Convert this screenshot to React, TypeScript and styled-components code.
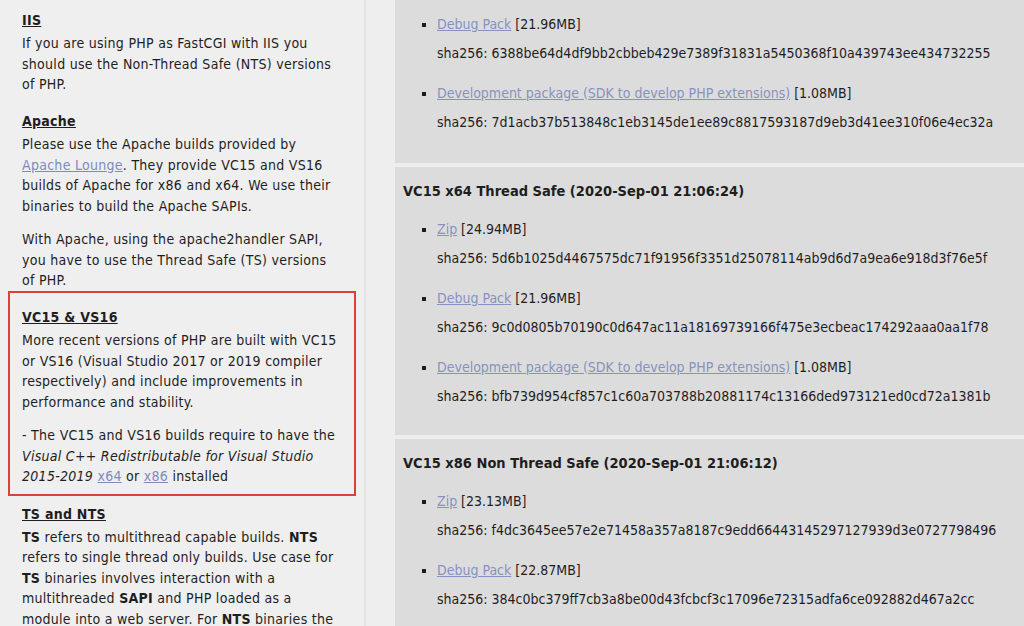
import React from 'react'
import styled, { createGlobalStyle } from 'styled-components'

const GlobalStyle = createGlobalStyle`
  html, body {
    margin: 0;
    padding: 0;
  }
  body {
    background: #eeeeee;
    color: #1e1e1e;
    font-family: 'DejaVu Sans', 'Liberation Sans', sans-serif;
  }
`

const Page = styled.div`
  display: flex;
  width: 1024px;
  height: 626px;
  overflow: hidden;
`

const Sidebar = styled.aside`
  flex: 0 0 366px;
  background: #efefef;
  border-right: 2px solid #e4e4e4;
  padding: 10px 0 0 22px;
  box-sizing: border-box;
  font-size: 14px;
  font-stretch: condensed;
  letter-spacing: 0.28px;
  line-height: 20.5px;
`

const SideText = styled.p<{ $tight?: boolean }>`
  margin: 0 0 ${({ $tight }) => ($tight ? 0.5 : 13)}px;
  white-space: nowrap;
`

const SideHeading = styled.h3`
  margin: 0 0 3px;
  font-size: 14px;
  line-height: 20px;
  font-weight: bold;
  text-decoration: underline;
  ${SideText} + & {
    margin-top: 16.5px;
  }
`

const Highlight = styled.section`
  width: 348px;
  box-sizing: border-box;
  margin: 0 0 8px -14px;
  padding: 14px 0 7px 12px;
  border: 2px solid #d9413d;
  ${SideText}:last-child {
    margin-bottom: 0;
  }
`

const SideLink = styled.a`
  color: #7f8bbd;
  text-decoration: underline;
`

const Main = styled.main`
  flex: 1;
  display: flex;
  flex-direction: column;
  gap: 4px;
  padding-left: 29px;
  background: #eeeeee;
  font-stretch: condensed;
`

const Panel = styled.div<{ $top?: number; $bottom?: number }>`
  background: #dcdcdc;
  padding: ${({ $top }) => $top ?? 14}px 0 ${({ $bottom }) => $bottom ?? 9}px 8px;
`

const BuildTitle = styled.h4`
  margin: 0 0 18px;
  font-size: 14.5px;
  line-height: 20px;
  font-weight: bold;
`

const Files = styled.ul`
  margin: 0;
  padding-left: 34px;
  list-style: square;
  font-size: 14px;
  line-height: 20px;
`

const File = styled.li`
  margin-bottom: 20px;
`

const FileLink = styled.a`
  color: #8892bf;
  text-decoration: underline;
`

const Sha = styled.span`
  display: block;
  margin-top: 9px;
  white-space: nowrap;
`

type Build = {
  title?: string
  top?: number
  bottom?: number
  files: { name: string; size: string; sha: string }[]
}

const DEV = 'Development package (SDK to develop PHP extensions)'

const builds: Build[] = [
  {
    top: 14,
    bottom: 11,
    files: [
      {
        name: 'Debug Pack',
        size: '21.96MB',
        sha: '6388be64d4df9bb2cbbeb429e7389f31831a5450368f10a439743ee434732255',
      },
      {
        name: DEV,
        size: '1.08MB',
        sha: '7d1acb37b513848c1eb3145de1ee89c8817593187d9eb3d41ee310f06e4ec32a',
      },
    ],
  },
  {
    title: 'VC15 x64 Thread Safe (2020-Sep-01 21:06:24)',
    files: [
      {
        name: 'Zip',
        size: '24.94MB',
        sha: '5d6b1025d4467575dc71f91956f3351d25078114ab9d6d7a9ea6e918d3f76e5f',
      },
      {
        name: 'Debug Pack',
        size: '21.96MB',
        sha: '9c0d0805b70190c0d647ac11a18169739166f475e3ecbeac174292aaa0aa1f78',
      },
      {
        name: DEV,
        size: '1.08MB',
        sha: 'bfb739d954cf857c1c60a703788b20881174c13166ded973121ed0cd72a1381b',
      },
    ],
  },
  {
    title: 'VC15 x86 Non Thread Safe (2020-Sep-01 21:06:12)',
    files: [
      {
        name: 'Zip',
        size: '23.13MB',
        sha: 'f4dc3645ee57e2e71458a357a8187c9edd66443145297127939d3e0727798496',
      },
      {
        name: 'Debug Pack',
        size: '22.87MB',
        sha: '384c0bc379ff7cb3a8be00d43fcbcf3c17096e72315adfa6ce092882d467a2cc',
      },
    ],
  },
]

export default function App() {
  return (
    <>
      <GlobalStyle />
      <Page>
        <Sidebar>
          <SideHeading>IIS</SideHeading>
          <SideText>
            If you are using PHP as FastCGI with IIS you
            <br />
            should use the Non-Thread Safe (NTS) versions
            <br />
            of PHP.
          </SideText>

          <SideHeading>Apache</SideHeading>
          <SideText>
            Please use the Apache builds provided by
            <br />
            <SideLink href="#">Apache Lounge</SideLink>. They provide VC15 and VS16
            <br />
            builds of Apache for x86 and x64. We use their
            <br />
            binaries to build the Apache SAPIs.
          </SideText>
          <SideText $tight>
            With Apache, using the apache2handler SAPI,
            <br />
            you have to use the Thread Safe (TS) versions
            <br />
            of PHP.
          </SideText>

          <Highlight>
            <SideHeading>VC15 &amp; VS16</SideHeading>
            <SideText>
              More recent versions of PHP are built with VC15
              <br />
              or VS16 (Visual Studio 2017 or 2019 compiler
              <br />
              respectively) and include improvements in
              <br />
              performance and stability.
            </SideText>
            <SideText>
              - The VC15 and VS16 builds require to have the
              <br />
              <i>Visual C++ Redistributable for Visual Studio</i>
              <br />
              <i>2015-2019</i> <SideLink href="#">x64</SideLink> or{' '}
              <SideLink href="#">x86</SideLink> installed
            </SideText>
          </Highlight>

          <SideHeading>TS and NTS</SideHeading>
          <SideText>
            <b>TS</b> refers to multithread capable builds. <b>NTS</b>
            <br />
            refers to single thread only builds. Use case for
            <br />
            <b>TS</b> binaries involves interaction with a
            <br />
            multithreaded <b>SAPI</b> and PHP loaded as a
            <br />
            module into a web server. For <b>NTS</b> binaries the
          </SideText>
        </Sidebar>

        <Main>
          {builds.map((build, i) => (
            <Panel key={i} $top={build.top} $bottom={build.bottom}>
              {build.title && <BuildTitle>{build.title}</BuildTitle>}
              <Files>
                {build.files.map((f) => (
                  <File key={f.sha}>
                    <FileLink href="#">{f.name}</FileLink> [{f.size}]
                    <Sha>sha256: {f.sha}</Sha>
                  </File>
                ))}
              </Files>
            </Panel>
          ))}
        </Main>
      </Page>
    </>
  )
}
